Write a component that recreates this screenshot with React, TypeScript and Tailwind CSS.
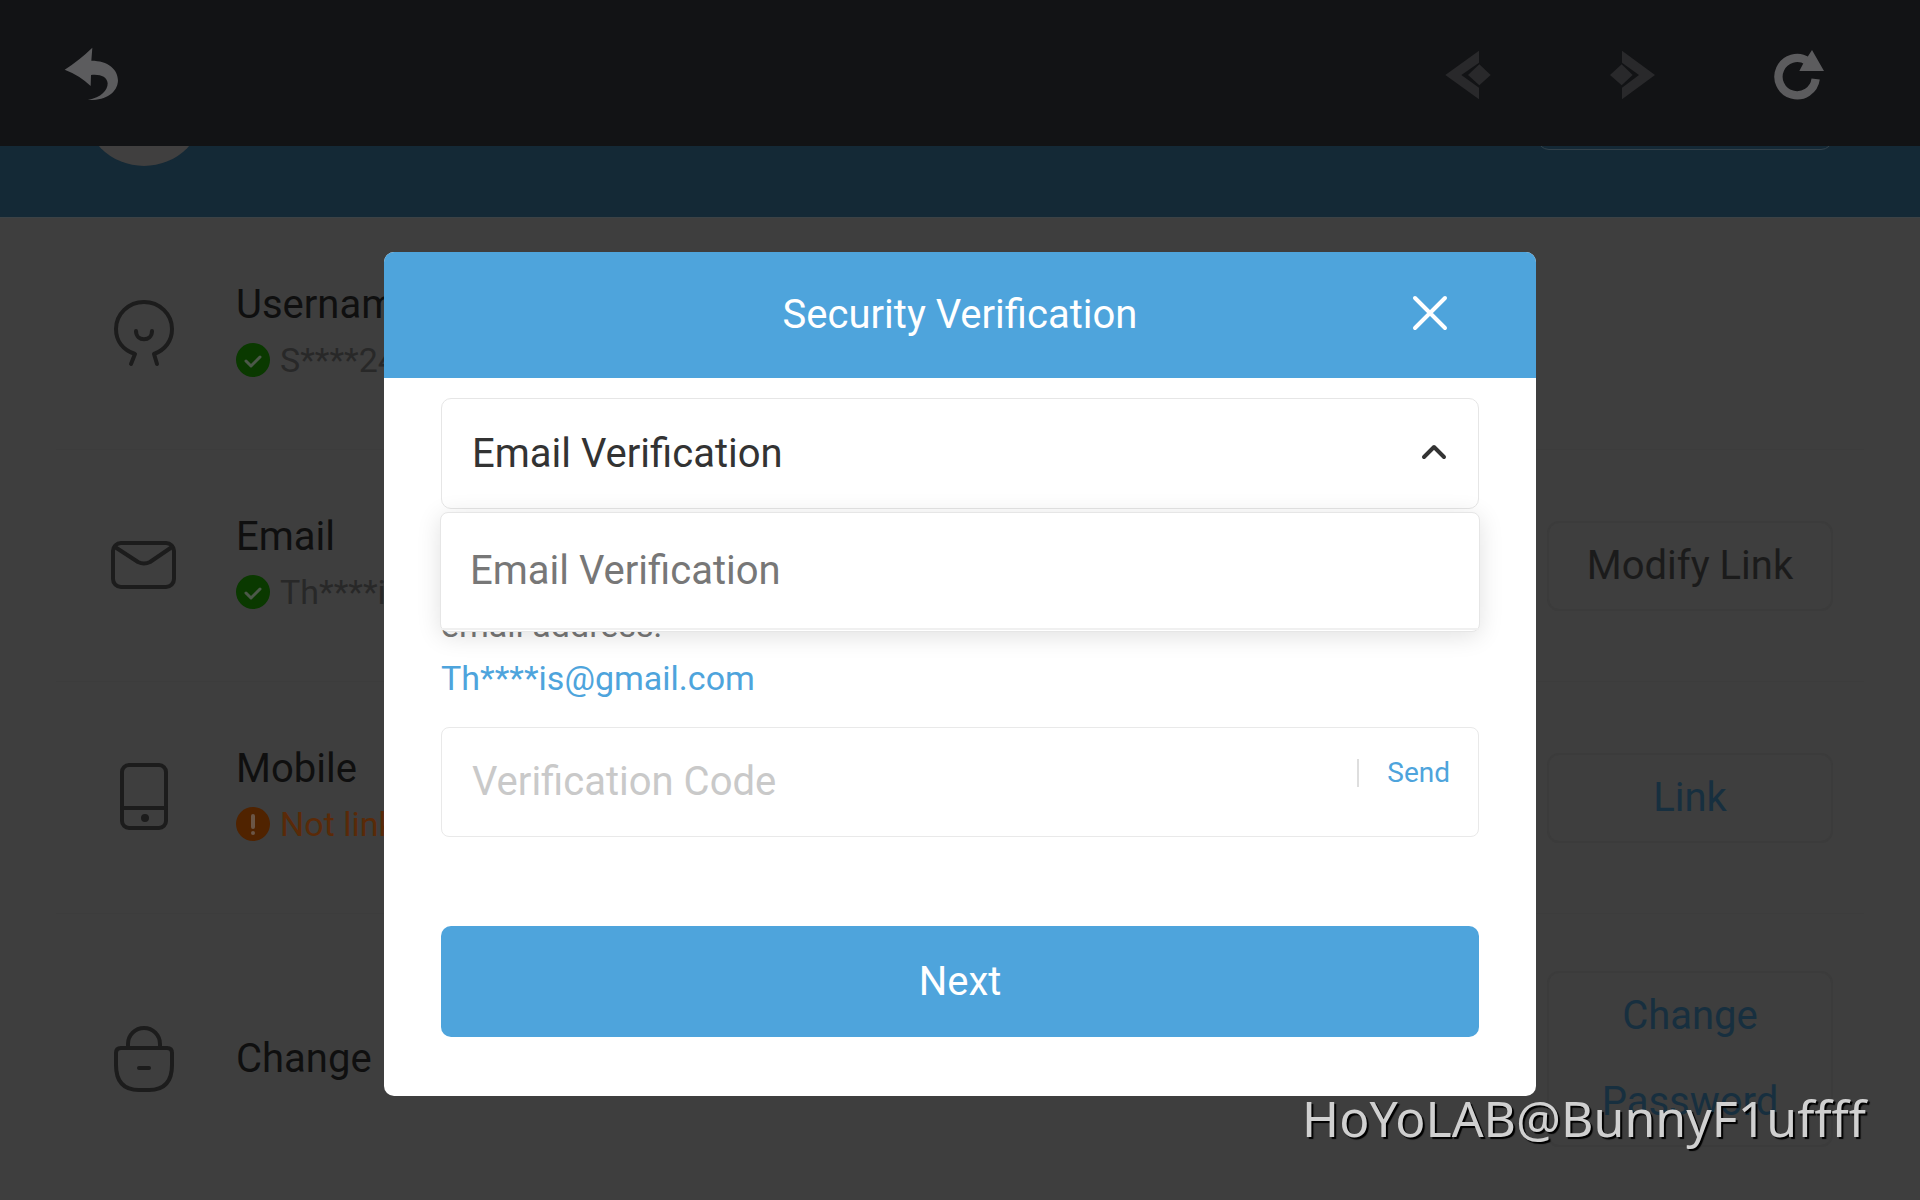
import { ReactNode, useState } from "react";

const CheckBadge = () => (
  <svg viewBox="0 0 34 34" className="w-[34px] h-[34px] shrink-0">
    <circle cx="17" cy="17" r="17" fill="#0a3900" />
    <path d="M10 18l5 5 9-9" fill="none" stroke="#4c5849" strokeWidth="3" strokeLinecap="round" strokeLinejoin="round" />
  </svg>
);

const WarnBadge = () => (
  <svg viewBox="0 0 34 34" className="w-[34px] h-[34px] shrink-0">
    <circle cx="17" cy="17" r="17" fill="#502300" />
    <path d="M17 9v11" stroke="#6b5646" strokeWidth="4" strokeLinecap="round" />
    <circle cx="17" cy="26" r="2" fill="#6b5646" />
  </svg>
);

const RowIcon = ({ children }: { children: ReactNode }) => (
  <svg
    viewBox="0 0 72 72"
    className="w-[72px] h-[72px] shrink-0"
    fill="none"
    stroke="#1c1c1c"
    strokeWidth="4"
    strokeLinecap="round"
    strokeLinejoin="round">
    {children}
  </svg>
);

const ROWS = [
  {
    title: "Username",
    value: "S****24",
    linked: true,
    action: "",
    actionColor: "",
    icon: (
      <>
        <path d="M23 66l4-10C15 52 8 43 8 31a28 27 0 0 1 56 0c0 12-7 21-18 25l3 10" />
        <path d="M28 33c0 11 16 11 16 0" />
      </>
    ),
  },
  {
    title: "Email",
    value: "Th****is@gmail.com",
    linked: true,
    action: "Modify Link",
    actionColor: "text-[#1b1b1b]",
    icon: (
      <>
        <rect x="5" y="13" width="61" height="44" rx="8" />
        <path d="M7 17l23 15q6 3 12 0l22-15" />
      </>
    ),
  },
  {
    title: "Mobile",
    value: "Not linked",
    linked: false,
    action: "Link",
    actionColor: "text-[#172f3f]",
    icon: (
      <>
        <rect x="14" y="3" width="44" height="63" rx="7" />
        <path d="M14 46h44" />
        <circle cx="37" cy="56" r="2" fill="#1c1c1c" />
      </>
    ),
  },
  {
    title: "Change Password",
    value: "",
    linked: true,
    action: "Change Password",
    actionColor: "text-[#172f3f]",
    icon: (
      <>
        <path d="M20 25v-4a16 16 0 0 1 32 0v4" />
        <path d="M13 25h46q5 0 5 5v12q0 25-23 25H31Q8 67 8 42V30q0-5 5-5z" />
        <path d="M31 45h10" />
      </>
    ),
  },
];

const TopBar = () => (
  <header className="flex items-center h-[146px] pl-[63px] pr-[93px] bg-[#121315]">
    <button aria-label="Back">
      <svg viewBox="190 135 168 168" className="w-14 h-14" fill="#5c5c5e">
        <path d="M195 209Q240 180 278 143L275 182C325 182 355 208 355 242C353 278 318 302 265 300C305 292 324 272 324 250C322 230 302 222 274 225L273 258Q240 226 195 209z" />
      </svg>
    </button>
    <nav className="flex gap-[109px] ml-auto">
      <button aria-label="Previous page">
        <svg viewBox="123 135 168 168" className="w-14 h-14" fill="#29292b">
          <path d="M136 225L237 152V188L184 225L237 263V298z" />
          <path d="M204 225L238 193L272 225L238 256z" />
        </svg>
      </button>
      <button aria-label="Next page">
        <svg viewBox="618 135 168 168" className="w-14 h-14" fill="#29292b">
          <path d="M765 225L666 152V188L717 225L666 263V298z" />
          <path d="M630 225L665 193L698 225L665 256z" />
        </svg>
      </button>
      <button aria-label="Reload">
        <svg viewBox="1113 135 168 168" className="w-14 h-14">
          <path d="M1247 237A56 56 0 1 1 1222 183" fill="none" stroke="#5c5c5e" strokeWidth="25" />
          <path d="M1236 150L1272 213L1198 213L1209 192L1222 172z" fill="#5c5c5e" />
        </svg>
      </button>
    </nav>
  </header>
);

const AccountRows = () => (
  <div className="mx-14">
    {ROWS.map((row, index) => (
      <div key={index} className="flex items-center min-h-[232px] py-[53px] last:py-[57px] pl-[52px] pr-[31px] border-b border-[#3c3c3c] last:border-0">
        <RowIcon>{row.icon}</RowIcon>
        <div className="ml-14">
          <div className="text-[40px] leading-[60px] text-[#0f0f0f]">{row.title}</div>
          {row.value && (
            <div className={`flex items-center gap-[10px] pb-2 text-[34px] leading-[50px] ${row.linked ? "text-[#282828]" : "text-[#5a2a08]"}`}>
              {row.linked ? <CheckBadge /> : <WarnBadge />}
              {row.value}
            </div>
          )}
        </div>
        {row.action && (
          <button className={`w-[286px] ml-auto px-8 border-2 border-[#3b3b3b] rounded-xl text-[40px] leading-[86px] ${row.actionColor}`}>
            {row.action}
          </button>
        )}
      </div>
    ))}
  </div>
);

const VerificationModal = () => {
  const [method, setMethod] = useState("email");

  return (
    <div role="dialog" aria-labelledby="modal-title" className="w-3/5 rounded-[10px] bg-white">
      <div className="grid grid-cols-[1fr_auto_1fr] items-center h-[126px] rounded-t-[10px] bg-[#4ea4dc] text-white">
        <h1 id="modal-title" className="col-start-2 text-[40px]">Security Verification</h1>
        <button aria-label="Close" className="justify-self-end mr-[88px] mb-1">
          <svg viewBox="0 0 36 36" className="w-9 h-9" stroke="currentColor" strokeWidth="4" strokeLinecap="round">
            <path d="M3 3l30 30M33 3L3 33" />
          </svg>
        </button>
      </div>

      <form className="px-[57px] pt-5 pb-[59px]" onSubmit={(e) => e.preventDefault()}>
        <div className="relative">
          <select
            aria-label="Verification method"
            value={method}
            onChange={(e) => setMethod(e.target.value)}
            className="block w-full h-[111px] px-[30px] appearance-none border border-[#e6e6e6] rounded-[10px] bg-white text-[40px] text-[#333]">
            <option value="email">Email Verification</option>
          </select>
          <svg viewBox="0 0 28 18" className="absolute right-[31px] top-[45px] w-7 h-[18px] pointer-events-none" fill="none" stroke="#333" strokeWidth="4" strokeLinecap="round" strokeLinejoin="round">
            <path d="M4 14L14 4l10 10" />
          </svg>
          {/* open menu */}
          <ul className="absolute -inset-x-px top-[114px] z-10 pb-px border border-[#e6e6e6] rounded-[8px] bg-white shadow-[0_4px_24px_rgba(0,0,0,0.12)]">
            <li className="border-b-2 border-[#f0f0f0]">
              <button type="button" className="w-full px-[29px] text-left text-[40px] leading-[115px] text-[#777]" onClick={() => setMethod("email")}>
                Email Verification
              </button>
            </li>
          </ul>
        </div>

        <p className="mt-[90px] text-[34px] leading-[53px] text-[#777]">
          email address:
          <span className="block text-[#4ea4dc]">Th****is@gmail.com</span>
        </p>

        <div className="flex mt-[22px] h-[110px] border border-[#e9e9e9] rounded-[8px]">
          <input
            type="text"
            aria-label="Verification Code"
            placeholder="Verification Code"
            className="grow min-w-0 pl-[30px] text-[40px] text-[#333] placeholder:text-[#c9c9c9] outline-none"
          />
          <button type="button" className="self-start mt-[31px] mr-7 pl-7 border-l-2 border-[#dedede] text-[28px] leading-7 text-[#4ea4dc]">
            Send
          </button>
        </div>

        <button type="submit" className="w-full h-[111px] mt-[89px] rounded-[10px] bg-[#4ea4dc] text-[40px] text-white">
          Next
        </button>
      </form>
    </div>
  );
};

export default function App() {
  return (
    <main className="relative h-screen overflow-hidden bg-[#3e3e3e] font-['Roboto',sans-serif]">
      <TopBar />
      {/* profile banner, scrolled under the top bar */}
      <div className="flex items-start justify-between h-[72px] pl-[83px] pr-[87px] overflow-hidden border-b border-[#3b4246] bg-[#142936]">
        <div className="w-[122px] h-[122px] -mt-[102px] rounded-full bg-[#403f3f]" />
        <div className="w-[296px] h-[88px] -mt-[84px] border border-[#33424b] rounded-xl" />
      </div>
      <AccountRows />

      <div className="absolute inset-x-0 bottom-0 top-[148px] flex items-center justify-center">
        <VerificationModal />
      </div>

      <div className="absolute right-[54px] bottom-12 font-['Noto_Sans',sans-serif] text-[50px] leading-[68px] text-[#d0d0d0] [text-shadow:2px_2px_1px_#000]">
        HoYoLAB@BunnyF1uffff
      </div>
    </main>
  );
}
